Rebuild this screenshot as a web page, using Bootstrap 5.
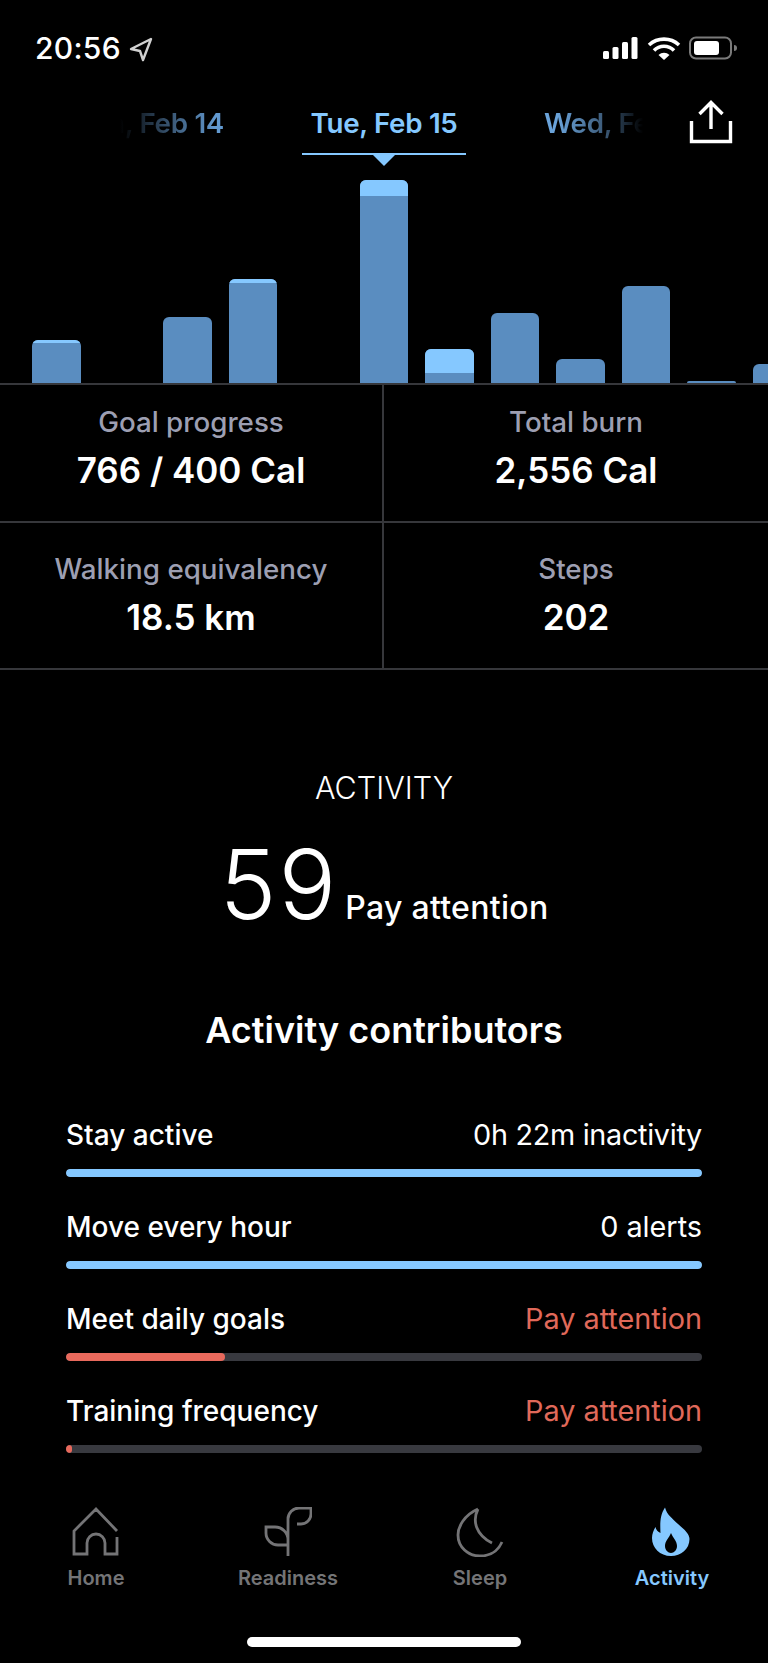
<!DOCTYPE html>
<html>
<head>
  <title>Activity</title>
  <link rel="stylesheet" href="https://cdn.jsdelivr.net/npm/bootstrap@5.3.0/dist/css/bootstrap.min.css">
  <script src="https://cdn.jsdelivr.net/npm/bootstrap@5.3.0/dist/js/bootstrap.bundle.min.js"></script>
  <style>
    html, body { background: #000; }
    body { width: 768px; height: 1663px; overflow: hidden; font-family: "Inter", "Liberation Sans", sans-serif; color: #fff; }
    .app-shell { height: 1663px; overflow: hidden; }
    .status-bar { height: 96px; padding: 28px 27px 0 35px; }
    .status-time { font-size: 30px; font-weight: 500; line-height: 40px; letter-spacing: .3px; }
    .date-row { height: 81px; gap: 78px; }
    .date-item { font-size: 27.75px; font-weight: 600; line-height: 54px; padding-bottom: 3px; letter-spacing: -.3px; white-space: nowrap; }
    .date-side { width: 160px; background-clip: text; -webkit-background-clip: text; color: transparent; }
    .date-prev { background-image: linear-gradient(to right, transparent 35%, #3c5a78 68%, #6299d0 95%); text-align: right; }
    .date-next { background-image: linear-gradient(to right, #6aa3da 8%, #3c5a78 38%, transparent 62%); }
    .date-active { color: #85c8ff; width: 164px; text-align: center; border-bottom: 2px solid #85c8ff; position: relative; }
    .date-active::after { content: ""; position: absolute; left: 50%; top: 100%; margin-left: -13px; border: 13px solid transparent; border-top-color: #85c8ff; border-bottom: 0; }
    .share-btn { position: absolute; left: 689px; top: 100px; }
    .chart { height: 208px; padding-left: 32.3px; gap: 17.1px; border-bottom: 2px solid #36373b; overflow: hidden; }
    .chart-bar { width: 48.4px; flex: none; background: #5a8dc0; border-radius: 6px 6px 0 0; overflow: hidden; }
    .chart-fill { background: #85c8ff; }
    .stat-cell { border-bottom: 2px solid #36373b; text-align: center; }
    .stat-cell:nth-child(odd) { border-right: 2px solid #36373b; }
    .stat-top { height: 138px; padding-top: 18px; }
    .stat-bottom { height: 147px; padding-top: 27px; }
    .stat-label { font-size: 27.75px; font-weight: 500; color: #9d9fb2; line-height: 38px; }
    .stat-value { font-size: 35px; font-weight: 600; line-height: 46px; margin-top: 6px; }
    .score-title { margin-top: 98px; font-size: 30.5px; font-weight: 300; line-height: 40px; }
    .score-line { margin-top: 26px; height: 100px; }
    .score-num { font-size: 96px; line-height: 100px; font-weight: 300; letter-spacing: 2px; }
    .score-state { font-size: 32px; font-weight: 500; margin-left: 7px; letter-spacing: .3px; }
    .contrib-title { font-size: 36px; font-weight: 600; line-height: 46px; margin-top: 73px; text-align: center; }
    .contrib-list { padding: 0 66px; margin-top: 63px; }
    .contrib-row { height: 92px; }
    .contrib-clipped { padding-top: 4px; }
    .contrib-name { font-size: 28px; font-weight: 500; line-height: 38px; }
    .contrib-val { font-size: 28.8px; line-height: 38px; }
    .contrib-tight { letter-spacing: -.3px; }
    .contrib-warn { color: #e0695a; }
    .contrib-track { height: 8px; border-radius: 4px; background: #38393f; margin-top: 15px; overflow: hidden; }
    .contrib-fill { height: 100%; background: #85c8ff; border-radius: 4px; }
    .contrib-fill-warn { background: #e8695c; }
    .tab-bar { position: absolute; left: 0; top: 1493px; width: 768px; height: 170px; padding-top: 14px; background: #000; }
    .tab-item { width: 25%; text-align: center; font-size: 20px; font-weight: 600; line-height: 30px; color: #747476; }
    .tab-item svg { display: block; margin: 0 auto 6px; }
    .tab-on { color: #85c8ff; }
    .home-bar { position: absolute; left: 247px; top: 1637px; width: 274px; height: 10px; border-radius: 5px; background: #fff; }
  </style>
</head>
<body>
  <div class="app-shell position-relative">
    <div class="status-bar d-flex justify-content-between">
      <div class="d-flex align-items-start gap-2">
        <span class="status-time">20:56</span>
        <svg class="mt-2" width="24" height="26" viewBox="0 0 24 26"><path d="M22 3 L2 13 L11 15 L14 24 Z" fill="none" stroke="#d0d0d0" stroke-width="2.4" stroke-linejoin="round"/></svg>
      </div>
      <svg width="138" height="30" viewBox="0 0 138 30" class="mt-2">
        <rect x="0" y="15" width="6" height="8" rx="1.5" fill="#fff"/>
        <rect x="9.5" y="11" width="6" height="12" rx="1.5" fill="#fff"/>
        <rect x="19" y="6" width="6" height="17" rx="1.5" fill="#fff"/>
        <rect x="28.5" y="1" width="6" height="22" rx="1.5" fill="#fff"/>
        <path d="M46 9 a22 22 0 0 1 30 0" fill="none" stroke="#fff" stroke-width="3.6"/>
        <path d="M51 14.500 a14 14 0 0 1 20 0" fill="none" stroke="#fff" stroke-width="3.6"/>
        <path d="M55.500 19 L61 24 L66.500 19 a8 8 0 0 0 -11 0 Z" fill="#fff"/>
        <rect x="87" y="1.500" width="41" height="21" rx="6" fill="none" stroke="#7a7a7a" stroke-width="2"/>
        <rect x="91" y="5" width="25" height="14" rx="3" fill="#fff"/>
        <path d="M131 9 v6 a3 3 0 0 0 0 -6 Z" fill="#7a7a7a"/>
      </svg>
    </div>
    <div class="date-row d-flex justify-content-center align-items-start">
      <div class="date-item date-side date-prev">Mon, Feb 14</div>
      <div class="date-item date-active">Tue, Feb 15</div>
      <div class="date-item date-side date-next">Wed, Feb 16</div>
    </div>
    <svg class="share-btn" width="44" height="46" viewBox="0 0 44 46"><path d="M22 29 V3 M10.500 14 L22 2.500 L33.500 14 M2.500 21 V41.500 H41.500 V21" fill="none" stroke="#fff" stroke-width="3.400"/></svg>
    <div class="chart d-flex align-items-end">
      <div class="chart-bar" style="height:43px"><div class="chart-fill" style="height:3px"></div></div>
      <div class="chart-bar" style="height:0"></div>
      <div class="chart-bar" style="height:66px"></div>
      <div class="chart-bar" style="height:104px"><div class="chart-fill" style="height:4px"></div></div>
      <div class="chart-bar" style="height:0"></div>
      <div class="chart-bar" style="height:203px"><div class="chart-fill" style="height:16px"></div></div>
      <div class="chart-bar" style="height:34px"><div class="chart-fill" style="height:24px"></div></div>
      <div class="chart-bar" style="height:70px"></div>
      <div class="chart-bar" style="height:24px"></div>
      <div class="chart-bar" style="height:97px"></div>
      <div class="chart-bar" style="height:2px"></div>
      <div class="chart-bar" style="height:19px"></div>
    </div>
    <div class="row g-0">
      <div class="col-6 stat-cell stat-top"><div class="stat-label">Goal progress</div><div class="stat-value">766 / 400 Cal</div></div>
      <div class="col-6 stat-cell stat-top"><div class="stat-label">Total burn</div><div class="stat-value">2,556 Cal</div></div>
      <div class="col-6 stat-cell stat-bottom"><div class="stat-label">Walking equivalency</div><div class="stat-value">18.5 km</div></div>
      <div class="col-6 stat-cell stat-bottom"><div class="stat-label">Steps</div><div class="stat-value">202</div></div>
    </div>
    <div class="score-title text-center">ACTIVITY</div>
    <div class="score-line d-flex justify-content-center align-items-baseline">
      <span class="score-num">59</span><span class="score-state">Pay attention</span>
    </div>
    <div class="contrib-title">Activity contributors</div>
    <div class="contrib-list">
      <div class="contrib-row">
        <div class="d-flex justify-content-between"><span class="contrib-name">Stay active</span><span class="contrib-val contrib-tight">0h 22m inactivity</span></div>
        <div class="contrib-track"><div class="contrib-fill" style="width:100%"></div></div>
      </div>
      <div class="contrib-row">
        <div class="d-flex justify-content-between"><span class="contrib-name">Move every hour</span><span class="contrib-val">0 alerts</span></div>
        <div class="contrib-track"><div class="contrib-fill" style="width:100%"></div></div>
      </div>
      <div class="contrib-row">
        <div class="d-flex justify-content-between"><span class="contrib-name">Meet daily goals</span><span class="contrib-val contrib-warn">Pay attention</span></div>
        <div class="contrib-track"><div class="contrib-fill contrib-fill-warn" style="width:25%"></div></div>
      </div>
      <div class="contrib-row">
        <div class="d-flex justify-content-between"><span class="contrib-name">Training frequency</span><span class="contrib-val contrib-warn">Pay attention</span></div>
        <div class="contrib-track"><div class="contrib-fill contrib-fill-warn" style="width:1%"></div></div>
      </div>
      <div class="contrib-row contrib-clipped">
        <div class="d-flex justify-content-between"><span class="contrib-name">Training volume</span><span class="contrib-val">Good</span></div>
        <div class="contrib-track"><div class="contrib-fill" style="width:80%"></div></div>
      </div>
    </div>
    <div class="tab-bar d-flex">
      <div class="tab-item">
        <svg width="48" height="50" viewBox="0 0 48 50"><path d="M45 24 L24 2 L2 24 V47 H15 V36 a9 9 0 0 1 18 0 V47 H45 V30" fill="none" stroke="#747476" stroke-width="2.800"/></svg>
        Home
      </div>
      <div class="tab-item">
        <svg width="48" height="50" viewBox="0 0 48 50"><path d="M24 49 V12 a11 11 0 0 1 11 -11 H47 V7 a10 10 0 0 1 -10 10 H33 M24 33 a13 13 0 0 0 -13 -13 H2 V26 a12 12 0 0 0 12 12 H24" fill="none" stroke="#747476" stroke-width="2.800"/></svg>
        Readiness
      </div>
      <div class="tab-item">
        <svg width="48" height="50" viewBox="0 0 48 50"><path d="M22 2 C8 8 2 20 2 28 C2 40 12 49 24 49 C34 49 42 44 46 35 M22 2 C16 14 20 28 36 36" fill="none" stroke="#747476" stroke-width="2.800"/></svg>
        Sleep
      </div>
      <div class="tab-item tab-on">
        <svg width="48" height="50" viewBox="0 0 48 50"><path fill-rule="evenodd" d="M17 0.500 C19 8 24 11 30 17 C37 23 41.500 27 41.500 32 C41.500 42 33 49 23 49 C12 49 4 41 4 31 C4 27 5.500 23 7.500 20 C8 23 10 25 12.500 26 C12 16 12 8 17 0.500 Z M23 26 C21 31 17 34 17 39 C17 43 20 46 23 46 C26 46 29 43 29 39 C29 34 25 31 23 26 Z" fill="#85c8ff"/></svg>
        Activity
      </div>
    </div>
    <div class="home-bar"></div>
  </div>
</body>
</html>
